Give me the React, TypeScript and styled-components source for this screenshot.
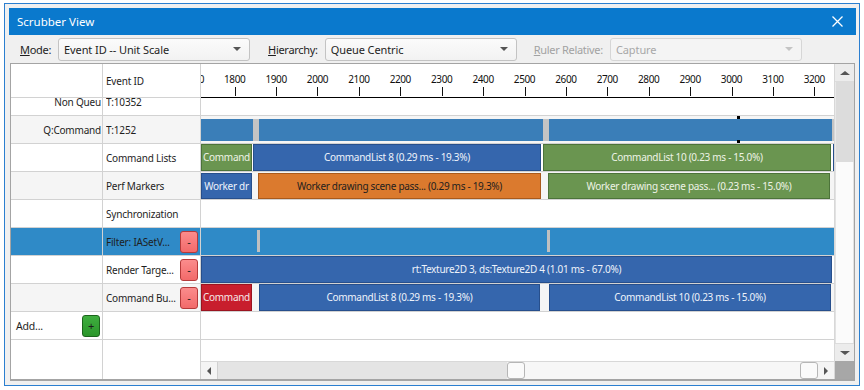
import React from 'react';
import styled, { createGlobalStyle, css } from 'styled-components';

const GlobalStyle = createGlobalStyle`
  html, body {
    margin: 0;
    padding: 0;
    background: #ffffff;
  }
  body {
    font-family: 'Noto Sans', 'Liberation Sans', sans-serif;
    font-size: 11px;
    letter-spacing: -0.3px;
    color: #1e1e1e;
  }
  * {
    box-sizing: border-box;
  }
`;

// absolute x of the track's left edge in the reference, used to map data
const ORIGIN = 201;
const TICK0 = 234.7;
const TICK_STEP = 41.4;

type Tone = 'queue' | 'gap' | 'blue' | 'green' | 'orange' | 'red' | 'mark';

type Span = { from: number; to: number; tone: Tone; label?: string };

const tones: Record<Tone, { bg: string; border: string; color: string }> = {
  queue: { bg: '#3a7eb8', border: '#3a7eb8', color: '#ffffff' },
  gap: { bg: '#c4c4c4', border: '#c4c4c4', color: '#ffffff' },
  blue: { bg: '#3566ad', border: '#274f8c', color: '#eef3fb' },
  green: { bg: '#6a9550', border: '#4c733a', color: '#eef3e6' },
  orange: { bg: '#db7a2e', border: '#a95a1c', color: '#1e1e1e' },
  red: { bg: '#c81e2d', border: '#9a1420', color: '#f6e6e8' },
  mark: { bg: '#c0c0c0', border: '#c0c0c0', color: '#ffffff' },
};

const Window = styled.div`
  margin: 3px 0 0 4px;
  width: 856px;
  height: 383px;
  border: 1px solid #2b7fd0;
  background: #f0f0f0;
  padding: 4px 3px 4px 4px;
  display: flex;
  flex-direction: column;
`;

const TitleBar = styled.div`
  height: 27px;
  flex: none;
  background: #0a79cd;
  color: #ffffff;
  display: flex;
  align-items: center;
  padding-left: 8px;
  font-size: 11.5px;
  letter-spacing: 0;
`;

const Title = styled.div`
  flex: 1;
`;

const CloseButton = styled.div`
  width: 11px;
  height: 11px;
  margin-right: 13px;
  display: flex;
`;

const Toolbar = styled.div`
  height: 28px;
  flex: none;
  display: flex;
  align-items: center;
  padding-left: 11px;
`;

const Label = styled.span<{ $disabled?: boolean; $gapLeft?: number }>`
  margin-left: ${(p) => p.$gapLeft ?? 0}px;
  margin-right: 7px;
  color: ${(p) => (p.$disabled ? '#a2a2a2' : '#1e1e1e')};
  white-space: nowrap;
`;

const Combo = styled.div<{ $disabled?: boolean }>`
  width: 192px;
  height: 23px;
  border: 1px solid ${(p) => (p.$disabled ? '#d6d6d6' : '#c3c3c3')};
  border-radius: 3px;
  background: ${(p) => (p.$disabled ? '#f4f4f4' : 'linear-gradient(#fbfbfb, #f2f2f2)')};
  color: ${(p) => (p.$disabled ? '#a8a8a8' : '#1e1e1e')};
  display: flex;
  align-items: center;
  padding-left: 5px;
  padding-right: 8px;
  letter-spacing: -0.1px;
`;

const ComboText = styled.span`
  flex: 1;
  white-space: nowrap;
`;

const Caret = styled.span<{ $disabled?: boolean }>`
  width: 0;
  height: 0;
  border-left: 4px solid transparent;
  border-right: 4px solid transparent;
  border-top: 4px solid ${(p) => (p.$disabled ? '#c4c4c4' : '#555555')};
`;

const Frame = styled.div`
  margin-left: 1px;
  width: 845px;
  height: 318px;
  flex: none;
  border: 1px solid #a4a4a4;
  border-width: 1px 1px 2px 1px;
  background: #ffffff;
  display: flex;
  font-size: 10px;
  letter-spacing: -0.2px;
`;

const Table = styled.div`
  flex: 1;
  display: flex;
  flex-direction: column;
  min-width: 0;
`;

const HeaderRow = styled.div`
  height: 34px;
  flex: none;
  display: flex;
`;

const Body = styled.div`
  flex: 1;
  overflow: hidden;
  display: flex;
  flex-direction: column;
`;

const rowBg = (p: { $shade?: boolean; $selected?: boolean }) =>
  p.$selected ? '#2f8ac7' : p.$shade ? '#f5f5f5' : '#ffffff';

const Row = styled.div<{ $shade?: boolean; $selected?: boolean; $offset?: number; $grow?: boolean }>`
  height: 28px;
  flex: ${(p) => (p.$grow ? '1' : 'none')};
  margin-top: ${(p) => p.$offset ?? 0}px;
  display: flex;
  background: ${rowBg};
  border-bottom: 1px solid #d2d2d2;
  ${(p) =>
    p.$grow &&
    css`
      border-bottom: none;
    `}
`;

const NameCell = styled.div<{ $header?: boolean }>`
  width: 92px;
  flex: none;
  border-right: 1px solid #d2d2d2;
  display: flex;
  align-items: center;
  justify-content: flex-end;
  padding-right: 1px;
  overflow: hidden;
  white-space: nowrap;
  ${(p) =>
    p.$header &&
    css`
      border-bottom: 1px solid #d2d2d2;
    `}
`;

const AddCell = styled(NameCell)`
  justify-content: space-between;
  padding-left: 5px;
  padding-right: 2px;
  font-size: 10.5px;
`;

const TypeCell = styled.div<{ $header?: boolean }>`
  width: 98px;
  flex: none;
  border-right: 1px solid #d2d2d2;
  display: flex;
  align-items: center;
  padding-left: 3px;
  padding-right: 2px;
  gap: 2px;
  white-space: nowrap;
  ${(p) =>
    p.$header &&
    css`
      border-bottom: 1px solid #d2d2d2;
    `}
`;

const TypeText = styled.span`
  flex: 1;
  overflow: hidden;
`;

const Track = styled.div`
  position: relative;
  flex: 1;
  overflow: hidden;
`;

const Ruler = styled(Track)`
  border-bottom: 1px solid #000000;
`;

const TickLabel = styled.span`
  position: absolute;
  top: 8px;
  transform: translateX(-50%);
  color: #111111;
  letter-spacing: -0.4px;
`;

const Tick = styled.span`
  position: absolute;
  top: 23px;
  width: 1px;
  height: 9px;
  background: #111111;
`;

const Bar = styled.div<{ $tone: Tone; $top: number; $h: number }>`
  position: absolute;
  top: ${(p) => p.$top}px;
  height: ${(p) => p.$h}px;
  background: ${(p) => tones[p.$tone].bg};
  border: 1px solid ${(p) => tones[p.$tone].border};
  color: ${(p) => tones[p.$tone].color};
  line-height: ${(p) => p.$h - 2}px;
  letter-spacing: -0.3px;
  text-align: center;
  white-space: nowrap;
  overflow: hidden;
`;

const Marker = styled.div`
  position: absolute;
  left: 536px;
  top: 0;
  bottom: 0;
  width: 3px;
  &::before,
  &::after {
    content: '';
    position: absolute;
    left: 0;
    width: 3px;
    height: 3px;
    background: #000000;
  }
  &::before {
    top: 0;
  }
  &::after {
    bottom: 0;
  }
`;

const SquareButton = styled.div<{ $kind: 'remove' | 'add' }>`
  width: 18px;
  height: 22px;
  flex: none;
  border-radius: 3px;
  display: flex;
  align-items: center;
  justify-content: center;
  color: #1e1e1e;
  font-size: 11px;
  ${(p) =>
    p.$kind === 'remove'
      ? css`
          background: linear-gradient(#fb8c8c, #f26a6a);
          border: 1px solid #b53a3a;
        `
      : css`
          background: linear-gradient(#3fae3f, #2a962a);
          border: 1px solid #1c641c;
        `}
`;

const Footer = styled.div`
  height: 18px;
  flex: none;
  display: flex;
`;

const FooterCell = styled.div<{ $w: number }>`
  width: ${(p) => p.$w}px;
  flex: none;
  border-right: 1px solid #d2d2d2;
`;

const HScroll = styled.div`
  flex: 1;
  display: flex;
  background: #f4f4f4;
  border-top: 1px solid #d8d8d8;
`;

const ArrowBox = styled.div`
  width: 16px;
  flex: none;
  display: flex;
  align-items: center;
  justify-content: center;
  background: #f4f4f4;
`;

const Arrow = styled.span<{ $dir: 'left' | 'right' | 'up' | 'down' }>`
  width: 0;
  height: 0;
  ${(p) =>
    p.$dir === 'left'
      ? css`
          border-top: 4px solid transparent;
          border-bottom: 4px solid transparent;
          border-right: 4px solid #555555;
        `
      : p.$dir === 'right'
      ? css`
          border-top: 4px solid transparent;
          border-bottom: 4px solid transparent;
          border-left: 4px solid #555555;
        `
      : p.$dir === 'up'
      ? css`
          border-left: 5px solid transparent;
          border-right: 5px solid transparent;
          border-bottom: 4px solid #555555;
        `
      : css`
          border-left: 5px solid transparent;
          border-right: 5px solid transparent;
          border-top: 4px solid #555555;
        `}
`;

const HTrackUsed = styled.div`
  width: 290px;
  flex: none;
  background: #e4e4e4;
  border-left: 1px solid #d0d0d0;
`;

const HThumb = styled.div`
  width: 18px;
  flex: none;
  background: #fafafa;
  border: 1px solid #b6b6b6;
  border-radius: 3px;
`;

const HTrackRest = styled.div`
  flex: 1;
  background: #f7f7f7;
`;

const VScroll = styled.div`
  width: 20px;
  flex: none;
  display: flex;
  flex-direction: column;
  border-left: 1px solid #d8d8d8;
  background: #f6f6f6;
`;

const VArrowBox = styled.div`
  height: 18px;
  flex: none;
  display: flex;
  align-items: center;
  justify-content: center;
  background: #ececec;
  border-bottom: 1px solid #dcdcdc;
`;

const VThumb = styled.div`
  height: 80px;
  flex: none;
  background: #dcdcdc;
  border-left: 1px solid #e9e9e9;
`;

const VTrack = styled.div`
  flex: 1;
  background: #fbfbfb;
  border-left: 1px solid #e2e2e2;
  border-right: 1px solid #e2e2e2;
`;

const VDown = styled(VArrowBox)`
  border-top: 1px solid #dcdcdc;
  border-bottom: none;
`;

const Corner = styled.div`
  height: 18px;
  flex: none;
  background: #a7a7a7;
`;

type TrackRow = {
  name?: string;
  type: string;
  shade?: boolean;
  selected?: boolean;
  remove?: boolean;
  top: number;
  h: number;
  spans: Span[];
  marker?: boolean;
};

const rows: TrackRow[] = [
  { name: 'Non Queu', type: 'T:10352', top: 1, h: 25, spans: [] },
  {
    name: 'Q:Command',
    type: 'T:1252',
    shade: true,
    top: 3,
    h: 22,
    marker: true,
    spans: [
      { from: 201, to: 253, tone: 'queue' },
      { from: 253, to: 259, tone: 'gap' },
      { from: 259, to: 543, tone: 'queue' },
      { from: 543, to: 549, tone: 'gap' },
      { from: 549, to: 832, tone: 'queue' },
      { from: 832, to: 838, tone: 'gap' },
    ],
  },
  {
    type: 'Command Lists',
    top: 0,
    h: 27,
    spans: [
      { from: 201, to: 252, tone: 'green', label: 'Command' },
      { from: 253, to: 541, tone: 'blue', label: 'CommandList 8 (0.29 ms - 19.3%)' },
      { from: 543, to: 831, tone: 'green', label: 'CommandList 10 (0.23 ms - 15.0%)' },
      { from: 833, to: 900, tone: 'blue' },
    ],
  },
  {
    type: 'Perf Markers',
    shade: true,
    top: 1,
    h: 26,
    spans: [
      { from: 201, to: 252, tone: 'blue', label: 'Worker dr' },
      { from: 258, to: 541, tone: 'orange', label: 'Worker drawing scene pass... (0.29 ms - 19.3%)' },
      { from: 548, to: 830, tone: 'green', label: 'Worker drawing scene pass... (0.23 ms - 15.0%)' },
    ],
  },
  { type: 'Synchronization', top: 1, h: 25, spans: [] },
  {
    type: 'Filter: IASetV...',
    selected: true,
    remove: true,
    top: 2,
    h: 22,
    spans: [
      { from: 257, to: 260, tone: 'mark' },
      { from: 547, to: 550, tone: 'mark' },
    ],
  },
  {
    type: 'Render Targe...',
    remove: true,
    top: 0,
    h: 27,
    spans: [
      { from: 201, to: 832, tone: 'blue', label: 'rt:Texture2D 3, ds:Texture2D 4 (1.01 ms - 67.0%)' },
    ],
  },
  {
    type: 'Command Bu...',
    shade: true,
    remove: true,
    top: 0,
    h: 27,
    spans: [
      { from: 201, to: 252, tone: 'red', label: 'Command' },
      { from: 259, to: 540, tone: 'blue', label: 'CommandList 8 (0.29 ms - 19.3%)' },
      { from: 549, to: 831, tone: 'blue', label: 'CommandList 10 (0.23 ms - 15.0%)' },
    ],
  },
];

const ticks = Array.from({ length: 16 }, (_, i) => 1700 + i * 100);

const CloseIcon = () => (
  <svg width="11" height="11" viewBox="0 0 11 11">
    <path d="M0.5 0.5 L10.5 10.5 M10.5 0.5 L0.5 10.5" stroke="#ffffff" strokeWidth="1.3" />
  </svg>
);

export default function App() {
  return (
    <>
      <GlobalStyle />
      <Window>
        <TitleBar>
          <Title>Scrubber View</Title>
          <CloseButton>
            <CloseIcon />
          </CloseButton>
        </TitleBar>
        <Toolbar>
          <Label>
            <u>M</u>ode:
          </Label>
          <Combo>
            <ComboText>Event ID -- Unit Scale</ComboText>
            <Caret />
          </Combo>
          <Label $gapLeft={18}>
            <u>H</u>ierarchy:
          </Label>
          <Combo>
            <ComboText>Queue Centric</ComboText>
            <Caret />
          </Combo>
          <Label $gapLeft={17} $disabled>
            <u>R</u>uler Relative:
          </Label>
          <Combo $disabled>
            <ComboText>Capture</ComboText>
            <Caret $disabled />
          </Combo>
        </Toolbar>
        <Frame>
          <Table>
            <HeaderRow>
              <NameCell $header />
              <TypeCell $header>Event ID</TypeCell>
              <Ruler>
                {ticks.map((t, i) => {
                  const x = TICK0 - ORIGIN + (i - 1) * TICK_STEP;
                  return (
                    <React.Fragment key={t}>
                      <TickLabel style={{ left: x }}>{t}</TickLabel>
                      <Tick style={{ left: Math.round(x) }} />
                    </React.Fragment>
                  );
                })}
              </Ruler>
            </HeaderRow>
            <Body>
              {rows.map((r, i) => (
                <Row key={r.type} $shade={r.shade} $selected={r.selected} $offset={i === 0 ? -10 : 0}>
                  <NameCell>{r.name}</NameCell>
                  <TypeCell>
                    <TypeText>{r.type}</TypeText>
                    {r.remove && <SquareButton $kind="remove">-</SquareButton>}
                  </TypeCell>
                  <Track>
                    {r.spans.map((s, j) => (
                      <Bar
                        key={j}
                        $tone={s.tone}
                        $top={r.top}
                        $h={r.h}
                        style={{ left: s.from - ORIGIN, width: s.to - s.from }}
                      >
                        {s.label}
                      </Bar>
                    ))}
                    {r.marker && <Marker />}
                  </Track>
                </Row>
              ))}
              <Row>
                <AddCell>
                  <span>Add...</span>
                  <SquareButton $kind="add">+</SquareButton>
                </AddCell>
                <TypeCell />
                <Track />
              </Row>
              <Row $grow>
                <NameCell />
                <TypeCell />
                <Track />
              </Row>
            </Body>
            <Footer>
              <FooterCell $w={92} />
              <FooterCell $w={98} />
              <HScroll>
                <ArrowBox>
                  <Arrow $dir="left" />
                </ArrowBox>
                <HTrackUsed />
                <HThumb />
                <HTrackRest />
                <HThumb />
                <ArrowBox>
                  <Arrow $dir="right" />
                </ArrowBox>
              </HScroll>
            </Footer>
          </Table>
          <VScroll>
            <VArrowBox>
              <Arrow $dir="up" />
            </VArrowBox>
            <VThumb />
            <VTrack />
            <VDown>
              <Arrow $dir="down" />
            </VDown>
            <Corner />
          </VScroll>
        </Frame>
      </Window>
    </>
  );
}
